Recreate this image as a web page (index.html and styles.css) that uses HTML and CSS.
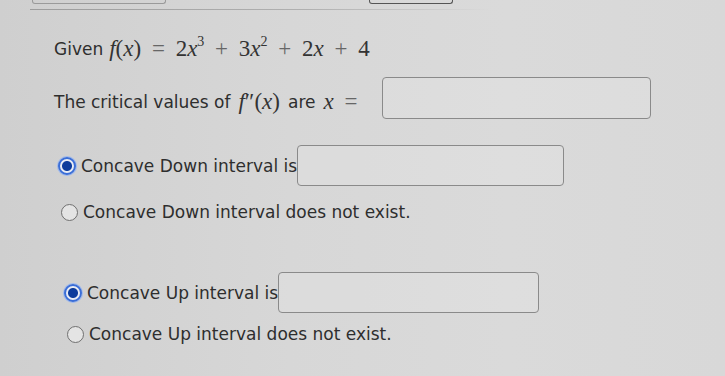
FILE: index.html
```html
<!DOCTYPE html>
<html>
<head>
<meta charset="utf-8">
<link rel="stylesheet" href="styles.css">
</head>
<body>
<div class="top">
  <div class="tab tab-a"></div>
  <div class="tab tab-b"></div>
</div>
<div class="rule"></div>
<div class="content">
  <div class="line given">
    <span class="txt">Given</span>
    <span class="math"><i>f</i>(<i>x</i>) <span class="op">=</span> 2<i>x</i><sup>3</sup> <span class="op">+</span> 3<i>x</i><sup>2</sup> <span class="op">+</span> 2<i>x</i> <span class="op">+</span> 4</span>
  </div>
  <div class="line crit">
    <span class="txt">The critical values of</span>
    <span class="math"><i>f</i>″(<i>x</i>)</span>
    <span class="txt">are</span>
    <span class="math"><i>x</i> <span class="op">=</span></span>
    <span class="box box-crit"></span>
  </div>
  <div class="opt opt-1">
    <span class="radio on"></span>
    <span class="txt">Concave Down interval is</span><span class="box box-down"></span>
  </div>
  <div class="opt opt-2">
    <span class="radio"></span>
    <span class="txt">Concave Down interval does not exist.</span>
  </div>
  <div class="opt opt-3">
    <span class="radio on"></span>
    <span class="txt">Concave Up interval is</span><span class="box box-up"></span>
  </div>
  <div class="opt opt-4">
    <span class="radio"></span>
    <span class="txt">Concave Up interval does not exist.</span>
  </div>
</div>
</body>
</html>
```
FILE: styles.css
```css
html, body {
  margin: 0;
  height: 100%;
}
body {
  background: linear-gradient(90deg, #cfcfcf 0%, #d7d7d7 40%, #dadada 70%, #d8d8d8 100%);
  color: #2e2e2e;
  font-family: "DejaVu Sans", sans-serif;
  overflow: hidden;
}
.top {
  display: flex;
  padding-left: 32px;
  height: 4px;
}
.tab {
  height: 3px;
  border: 1px solid #9a9a9a;
  border-top: none;
  border-radius: 0 0 3px 3px;
}
.tab-a { width: 132px; }
.tab-b { width: 82px; margin-left: 203px; border-color: #555; }
.rule {
  margin: 5px 0 0 30px;
  width: 460px;
  height: 1px;
  background: linear-gradient(90deg, #9c9c9c, #b0b0b0 60%, rgba(180,180,180,0));
}
.content {
  padding-left: 54px;
}
.txt {
  font-size: 17px;
}
.math {
  font-family: "Liberation Serif", serif;
  font-size: 23px;
  color: #333;
}
.math i { font-style: italic; }
.math sup { font-size: 14px; vertical-align: 10px; line-height: 0; }
.op { margin: 0 5px; color: #666; }
.line {
  display: flex;
  align-items: center;
  gap: 6px;
}
.given {
  margin-top: 26px;
  height: 26px;
}
.crit {
  margin-top: 15px;
  gap: 8px;
}
.crit .txt, .crit .math {
  margin-top: 8px;
}
.box {
  display: inline-block;
  border: 1.5px solid #8a8a8a;
  border-radius: 4px;
  background: rgba(230,230,230,0.35);
  box-sizing: border-box;
}
.box-crit { width: 269px; height: 42px; margin-left: 12px; }
.opt {
  display: flex;
  align-items: center;
}
.opt .txt { margin-left: 5px; }
.opt-1 { margin-top: 26px; margin-left: 4px; }
.opt-2 { margin-top: 16px; margin-left: 7px; }
.opt-3 { margin-top: 50px; margin-left: 10px; }
.opt-4 { margin-top: 11px; margin-left: 13px; }
.box-down { width: 267px; height: 41px; }
.box-up { width: 261px; height: 41px; }
.radio {
  width: 15px;
  height: 15px;
  border-radius: 50%;
  border: 1.5px solid #707070;
  background: #e4e4e4;
  flex: none;
}
.radio.on {
  width: 14px;
  height: 14px;
  border: 2px solid #3a6ed8;
  box-shadow: 0 0 0 1px #9db8ee;
  background: radial-gradient(circle, #0c3b9c 0 4.5px, #e9ecf4 5.5px);
}
```
